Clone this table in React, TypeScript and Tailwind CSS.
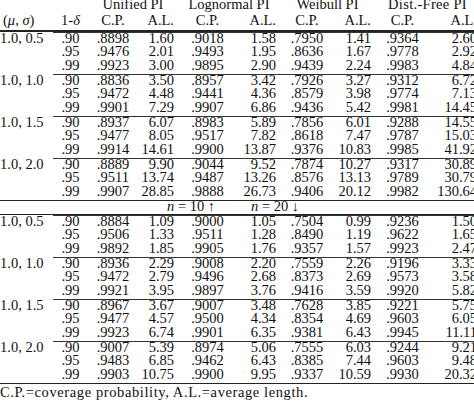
import React from "react";

type Block = { label: string; rows: string[][] };

const upper: Block[] = [
    {
        label: "1.0, 0.5",
        rows: [
            [".90", ".8898", "1.60", ".9018", "1.58", ".7950", "1.41", ".9364", "2.60"],
            [".95", ".9476", "2.01", ".9493", "1.95", ".8636", "1.67", ".9778", "2.92"],
            [".99", ".9923", "3.00", ".9895", "2.90", ".9439", "2.24", ".9983", "4.84"],
        ],
    },
    {
        label: "1.0, 1.0",
        rows: [
            [".90", ".8836", "3.50", ".8957", "3.42", ".7926", "3.27", ".9312", "6.72"],
            [".95", ".9472", "4.48", ".9441", "4.36", ".8579", "3.98", ".9774", "7.13"],
            [".99", ".9901", "7.29", ".9907", "6.86", ".9436", "5.42", ".9981", "14.45"],
        ],
    },
    {
        label: "1.0, 1.5",
        rows: [
            [".90", ".8937", "6.07", ".8983", "5.89", ".7856", "6.01", ".9288", "14.55"],
            [".95", ".9477", "8.05", ".9517", "7.82", ".8618", "7.47", ".9787", "15.03"],
            [".99", ".9914", "14.61", ".9900", "13.87", ".9376", "10.83", ".9985", "41.92"],
        ],
    },
    {
        label: "1.0, 2.0",
        rows: [
            [".90", ".8889", "9.90", ".9044", "9.52", ".7874", "10.27", ".9317", "30.89"],
            [".95", ".9511", "13.74", ".9487", "13.26", ".8576", "13.13", ".9789", "30.79"],
            [".99", ".9907", "28.85", ".9888", "26.73", ".9406", "20.12", ".9982", "130.64"],
        ],
    },
];

const lower: Block[] = [
    {
        label: "1.0, 0.5",
        rows: [
            [".90", ".8884", "1.09", ".9000", "1.05", ".7504", "0.99", ".9236", "1.50"],
            [".95", ".9506", "1.33", ".9511", "1.28", ".8490", "1.19", ".9622", "1.65"],
            [".99", ".9892", "1.85", ".9905", "1.76", ".9357", "1.57", ".9923", "2.47"],
        ],
    },
    {
        label: "1.0, 1.0",
        rows: [
            [".90", ".8936", "2.29", ".9008", "2.20", ".7559", "2.26", ".9196", "3.33"],
            [".95", ".9472", "2.79", ".9496", "2.68", ".8373", "2.69", ".9573", "3.58"],
            [".99", ".9921", "3.95", ".9897", "3.76", ".9416", "3.59", ".9920", "5.82"],
        ],
    },
    {
        label: "1.0, 1.5",
        rows: [
            [".90", ".8967", "3.67", ".9007", "3.48", ".7628", "3.85", ".9221", "5.75"],
            [".95", ".9477", "4.57", ".9500", "4.34", ".8354", "4.69", ".9603", "6.05"],
            [".99", ".9923", "6.74", ".9901", "6.35", ".9381", "6.43", ".9945", "11.11"],
        ],
    },
    {
        label: "1.0, 2.0",
        rows: [
            [".90", ".9007", "5.39", ".8974", "5.06", ".7555", "6.03", ".9244", "9.21"],
            [".95", ".9483", "6.85", ".9462", "6.43", ".8385", "7.44", ".9603", "9.48"],
            [".99", ".9903", "10.75", ".9900", "9.95", ".9337", "10.59", ".9930", "20.32"],
        ],
    },
];

// widths of the nine value columns (after the 53px label column)
const cols = [
    "w-[35px] shrink-0 text-center",
    "w-[50px] shrink-0 text-center",
    "w-[40px] shrink-0 text-right pr-[4px]",
    "w-[59px] shrink-0 text-center",
    "w-[43px] shrink-0 text-right pr-[4px]",
    "w-[54px] shrink-0 text-center",
    "w-[41px] shrink-0 text-right pr-[4px]",
    "w-[55px] shrink-0 text-center",
    "w-[50px] shrink-0 text-right pr-[3px]",
];

function BlockRows({ block }: { block: Block }) {
    return (
        <>
            {block.rows.map((r, i) => (
                <div key={i} className="flex h-[14px] leading-[10px]">
                    <div className={`w-[53px] shrink-0 whitespace-nowrap ${i === 0 ? "border-t border-transparent" : ""}`}>
                        {i === 0 ? block.label : ""}
                    </div>
                    {r.map((v, j) => (
                        <div key={j} className={`${cols[j]} ${i === 0 ? "border-t border-[#333]" : ""}`}>
                            {v}
                        </div>
                    ))}
                </div>
            ))}
        </>
    );
}

export default function App() {
    return (
        <div className="w-[474px] h-[401px] overflow-hidden bg-white text-[#111] text-[14.5px] font-['Liberation_Serif',serif]">
            <div className="w-[480px]">
                {/* group header */}
                <div className="flex h-[16px] leading-[16px] -mt-[4px] whitespace-nowrap">
                    <div className="w-[88px] shrink-0" />
                    <div className="w-[90px] shrink-0 text-center">Unified PI</div>
                    <div className="w-[102px] shrink-0 text-center">Lognormal PI</div>
                    <div className="w-[95px] shrink-0 text-center">Weibull PI</div>
                    <div className="w-[105px] shrink-0 text-center tracking-[0.3px]">Dist.-Free PI</div>
                </div>
                {/* column header */}
                <div className="flex h-[16px] leading-[16px] whitespace-nowrap">
                    <div className="w-[53px] shrink-0 pl-[3px]">
                        (<i>μ</i>, <i>σ</i>)
                    </div>
                    <div className={cols[0]}>
                        1-<i>δ</i>
                    </div>
                    <div className={cols[1]}>C.P.</div>
                    <div className={cols[2]}>A.L.</div>
                    <div className={cols[3]}>C.P.</div>
                    <div className={cols[4]}>A.L.</div>
                    <div className={cols[5]}>C.P.</div>
                    <div className={cols[6]}>A.L.</div>
                    <div className={cols[7]}>C.P.</div>
                    <div className={cols[8]}>A.L.</div>
                </div>
                <div className="mt-[2px] h-[1.5px] bg-[#222]" />

                {upper.map((b) => (
                    <BlockRows key={"u" + b.label} block={b} />
                ))}

                {/* sample size row */}
                <div className="flex h-[15px] leading-[11px] border-y border-[#222] whitespace-nowrap">
                    <div className="w-[167px] shrink-0" />
                    <div className="w-[84px] shrink-0">
                        <i>n</i> = 10 ↑
                    </div>
                    <div>
                        <i>n</i> = 20 ↓
                    </div>
                </div>

                {lower.map((b) => (
                    <BlockRows key={"l" + b.label} block={b} />
                ))}

                <div className="h-[1.5px] bg-[#222]" />
                <div className="h-[17px] leading-[17px] whitespace-nowrap tracking-[0.6px]">
                    C.P.=coverage probability, A.L.=average length.
                </div>
            </div>
        </div>
    );
}
